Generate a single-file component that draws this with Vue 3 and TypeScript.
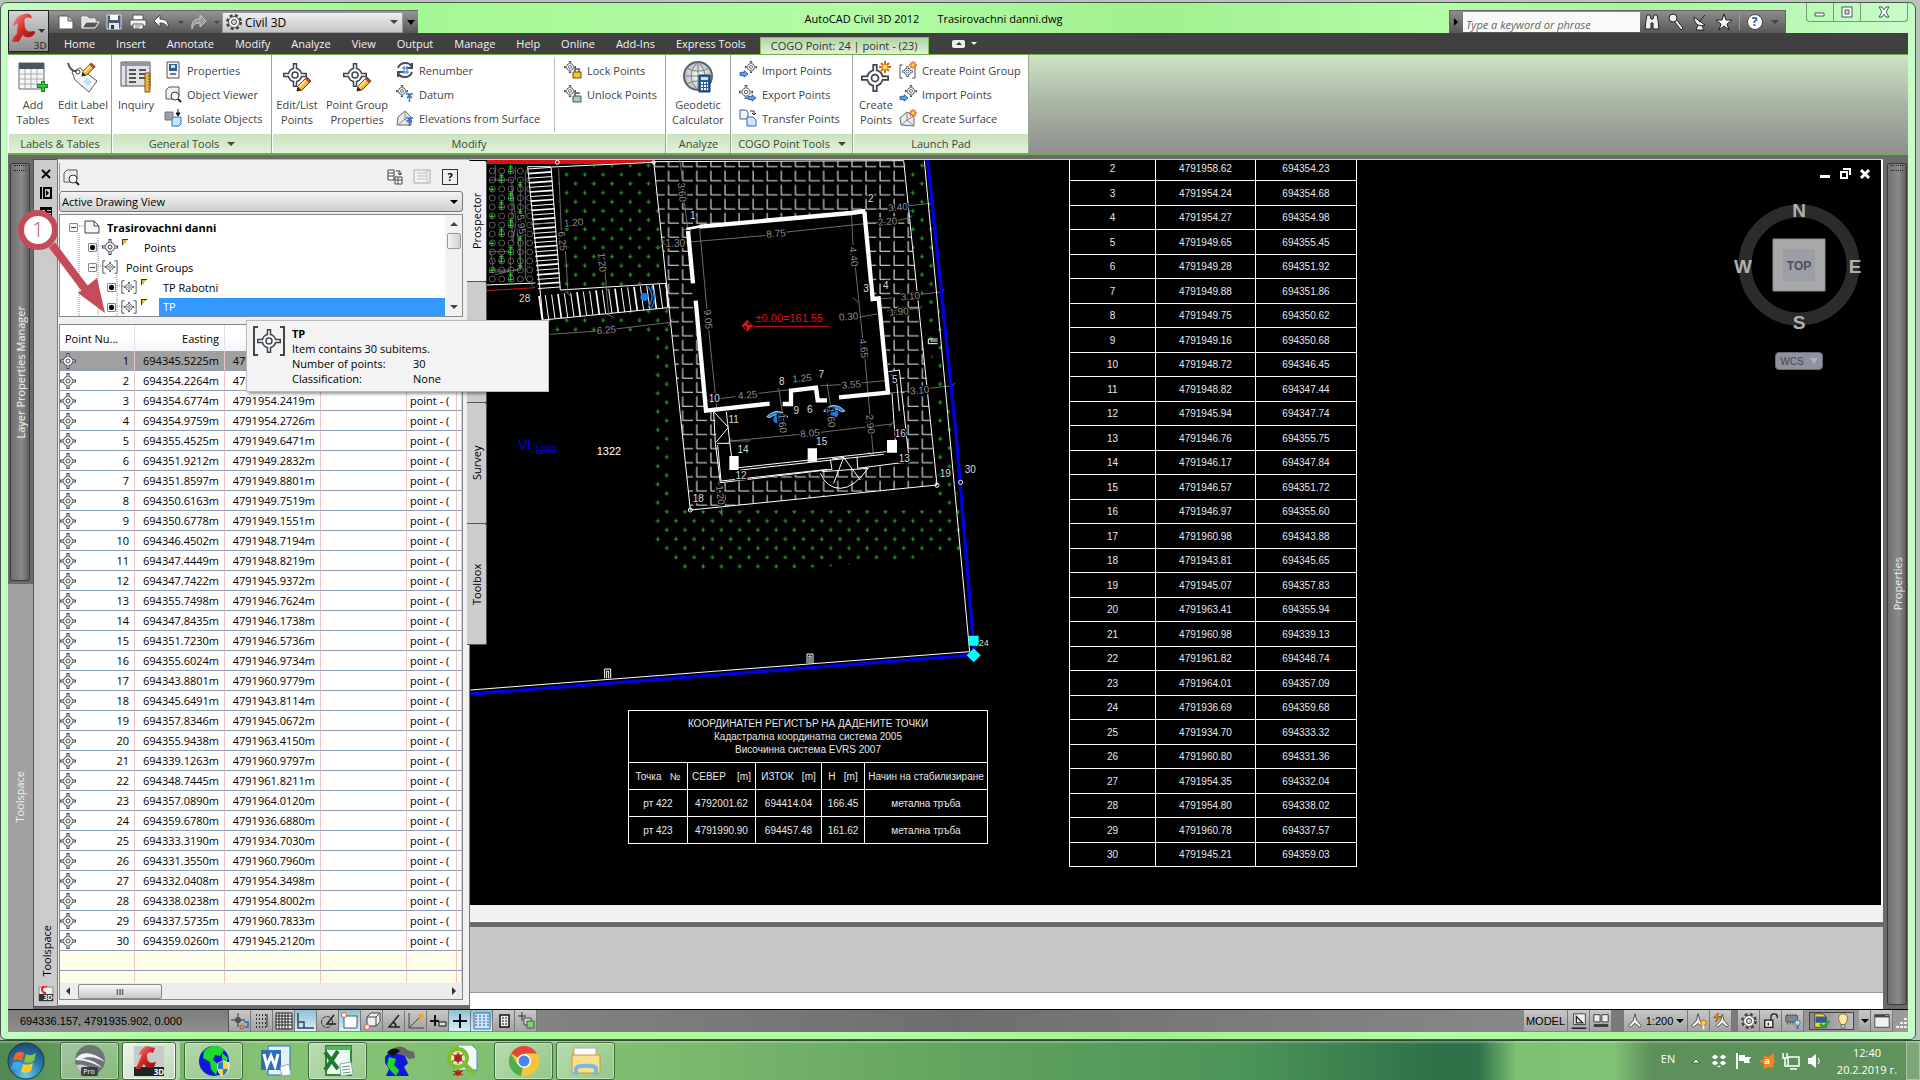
<script setup lang="ts">
interface Tool { icon: string; label: string }
interface Panel { title: string; menu?: boolean; big: Tool[]; small: Tool[]; extra?: Tool[] }

const tabs = ['Home', 'Insert', 'Annotate', 'Modify', 'Analyze', 'View', 'Output', 'Manage', 'Help', 'Online', 'Add-Ins', 'Express Tools']

const quick = ['new', 'open', 'save', 'print', 'undo', 'redo']

const panels: Panel[] = [
  { title: 'Labels & Tables', big: [{ icon: 'addtable', label: 'Add\nTables' }, { icon: 'label', label: 'Edit Label\nText' }], small: [] },
  {
    title: 'General Tools', menu: true, big: [{ icon: 'inquiry', label: 'Inquiry' }],
    small: [{ icon: 'props', label: 'Properties' }, { icon: 'viewer', label: 'Object Viewer' }, { icon: 'isolate', label: 'Isolate Objects' }],
  },
  {
    title: 'Modify', big: [{ icon: 'editpt', label: 'Edit/List\nPoints' }, { icon: 'editpt', label: 'Point Group\nProperties' }],
    small: [{ icon: 'renumber', label: 'Renumber' }, { icon: 'datum', label: 'Datum' }, { icon: 'elev', label: 'Elevations from Surface' }],
    extra: [{ icon: 'lock', label: 'Lock Points' }, { icon: 'unlock', label: 'Unlock Points' }],
  },
  { title: 'Analyze', big: [{ icon: 'geocalc', label: 'Geodetic\nCalculator' }], small: [] },
  {
    title: 'COGO Point Tools', menu: true, big: [],
    small: [{ icon: 'import', label: 'Import Points' }, { icon: 'export', label: 'Export Points' }, { icon: 'transfer', label: 'Transfer Points' }],
  },
  {
    title: 'Launch Pad', big: [{ icon: 'creatept', label: 'Create\nPoints' }],
    small: [{ icon: 'newgroup', label: 'Create Point Group' }, { icon: 'import', label: 'Import Points' }, { icon: 'surface', label: 'Create Surface' }],
  },
]

const points: [string, string][] = [
  ['694345.5225', '4791960.4700'], ['694354.2264', '4791958.6200'], ['694354.6774', '4791954.2419'], ['694354.9759', '4791954.2726'],
  ['694355.4525', '4791949.6471'], ['694351.9212', '4791949.2832'], ['694351.8597', '4791949.8801'], ['694350.6163', '4791949.7519'],
  ['694350.6778', '4791949.1551'], ['694346.4502', '4791948.7194'], ['694347.4449', '4791948.8219'], ['694347.7422', '4791945.9372'],
  ['694355.7498', '4791946.7624'], ['694347.8435', '4791946.1738'], ['694351.7230', '4791946.5736'], ['694355.6024', '4791946.9734'],
  ['694343.8801', '4791960.9779'], ['694345.6491', '4791943.8114'], ['694357.8346', '4791945.0672'], ['694355.9438', '4791963.4150'],
  ['694339.1263', '4791960.9797'], ['694348.7445', '4791961.8211'], ['694357.0890', '4791964.0120'], ['694359.6780', '4791936.6880'],
  ['694333.3190', '4791934.7030'], ['694331.3550', '4791960.7960'], ['694332.0408', '4791954.3498'], ['694338.0238', '4791954.8002'],
  ['694337.5735', '4791960.7833'], ['694359.0260', '4791945.2120'],
]

const sheet: [number, string, string][] = [
  [2, '4791958.62', '694354.23'], [3, '4791954.24', '694354.68'], [4, '4791954.27', '694354.98'], [5, '4791949.65', '694355.45'],
  [6, '4791949.28', '694351.92'], [7, '4791949.88', '694351.86'], [8, '4791949.75', '694350.62'], [9, '4791949.16', '694350.68'],
  [10, '4791948.72', '694346.45'], [11, '4791948.82', '694347.44'], [12, '4791945.94', '694347.74'], [13, '4791946.76', '694355.75'],
  [14, '4791946.17', '694347.84'], [15, '4791946.57', '694351.72'], [16, '4791946.97', '694355.60'], [17, '4791960.98', '694343.88'],
  [18, '4791943.81', '694345.65'], [19, '4791945.07', '694357.83'], [20, '4791963.41', '694355.94'], [21, '4791960.98', '694339.13'],
  [22, '4791961.82', '694348.74'], [23, '4791964.01', '694357.09'], [24, '4791936.69', '694359.68'], [25, '4791934.70', '694333.32'],
  [26, '4791960.80', '694331.36'], [27, '4791954.35', '694332.04'], [28, '4791954.80', '694338.02'], [29, '4791960.78', '694337.57'],
  [30, '4791945.21', '694359.03'],
]

// Dimension texts: value, x, y, rotation
const dims: [string, number, number, number][] = [
  ['3.60', 635, 112, 84], ['1.30', 615, 265, 0], ['8.75', 917, 236, -5], ['9.05', 713, 493, 84], ['4.40', 1150, 305, 84],
  ['3.40', 1283, 157, -5], ['2.20', 1252, 200, -5], ['3.10', 1320, 424, -5], ['0.30', 1135, 485, -5], ['1.90', 1286, 470, -5],
  ['4.65', 1180, 580, 84], ['1.25', 995, 670, -5], ['3.55', 1143, 689, -5], ['4.25', 832, 720, -5], ['3.10', 1348, 706, -5],
  ['8.05', 1019, 835, -5], ['2.90', 1200, 808, 84], ['1.60', 936, 805, 84], ['1.60', 1082, 788, 84], ['1.20', 750, 1020, 84],
  ['5.95', 153, 208, 84], ['1.20', 310, 203, -5], ['6.25', 276, 258, 84], ['1.20', 395, 322, 84], ['6.25', 408, 525, -5],
]
const marks: [string, number, number][] = [
  ['1', 667, 183], ['2', 1201, 130], ['3', 1187, 402], ['4', 1246, 393], ['5', 1273, 675], ['6', 1018, 765], ['7', 1053, 660],
  ['8', 934, 681], ['9', 978, 768], ['10', 732, 730], ['11', 790, 793], ['12', 812, 963], ['13', 1302, 910], ['14', 818, 885],
  ['15', 1054, 861], ['16', 1290, 837], ['18', 684, 1030], ['19', 1425, 955], ['30', 1500, 945], ['28', 163, 432],
]

const flight = Array.from({ length: 27 }, (_, i) => {
  const y = 42 + i * 13.8
  return { x1: 172 + (y - 35) * 0.085, y1: y, x2: 243 + (y - 35) * 0.075, y2: y - 5, w: i % 2 ? 5 : 3 }
})
const walk = Array.from({ length: 21 }, (_, i) => {
  const x = 206 + i * 19
  const y = 423 - (x - 200) * 0.095
  return { x1: x, y1: y, x2: x + 10, y2: y + 72, w: i % 3 ? 3 : 5 }
})
const trees = Array.from({ length: 65 }, (_, i) => ({ x: 66 + (i % 5) * 28, y: 48 + Math.floor(i / 5) * 27 }))

const toggles = [
  { icon: 's-infer' }, { icon: 's-snap' }, { icon: 's-grid' }, { icon: 's-ortho', on: true }, { icon: 's-polar' }, { icon: 's-osnap', on: true },
  { icon: 's-3d' }, { icon: 's-track' }, { icon: 's-ducs' }, { icon: 's-dyn' }, { icon: 's-lwt', on: true }, { icon: 's-tpy', on: true },
  { icon: 's-qp' }, { icon: 's-sc' },
]
const apps = [
  { icon: 't-earth', kind: 'open' }, { icon: 't-cad', kind: 'active' }, { icon: 't-globe', kind: 'open' }, { icon: 't-word', kind: '' },
  { icon: 't-excel', kind: 'open' }, { icon: 't-mole', kind: '' }, { icon: 't-bug', kind: '' }, { icon: 't-chrome', kind: 'open' },
  { icon: 't-folder', kind: 'open' },
]
</script>

<template>
  <svg class="sprite" aria-hidden="true">
    <defs>
      <linearGradient id="g-red" x1="0" y1="0" x2="1" y2="1"><stop offset="0" stop-color="#f5a0a0" /><stop offset=".5" stop-color="#d42a2a" /><stop offset="1" stop-color="#8a0808" /></linearGradient>
      <radialGradient id="g-orb" cx=".5" cy=".9" r=".9"><stop offset="0" stop-color="#5fd0ee" /><stop offset=".5" stop-color="#2a7bb0" /><stop offset="1" stop-color="#1c4a70" /></radialGradient>
      <radialGradient id="g-silver"><stop offset="0" stop-color="#fff" /><stop offset="1" stop-color="#b9bdc4" /></radialGradient>
    </defs>
    <symbol id="pt" viewBox="0 0 16 16"><path d="M8 0v16M0 8h16" stroke="#3d4450" stroke-width="3" /><circle cx="8" cy="8" r="5" fill="#3d4450" /><path d="M8 1v14M1 8h14" stroke="#fff" /><circle cx="8" cy="8" r="4" fill="#fff" /><circle cx="8" cy="8" r="2" fill="none" stroke="#3d4450" /></symbol>
    <symbol id="ptg" viewBox="0 0 18 16"><path d="M4 1H1v14h3M14 1h3v14h-3" fill="none" stroke="#3d4450" /><use href="#pt" x="3" y="2" width="12" height="12" /></symbol>
    <symbol id="pencil" viewBox="0 0 16 16"><path d="M1 15l1-5 9-9 4 4-9 9z" fill="#f6b73c" stroke="#5b3a10" /><path d="M3 11l8-8" stroke="#ffe08a" stroke-width="2" /><path d="M1 15l1-4 3 3z" fill="#222" /><path d="M11 1l4 4-2 2-4-4z" fill="#b5402a" /></symbol>
    <symbol id="spark" viewBox="0 0 12 12"><path d="M6 0v12M0 6h12M2 2l8 8M10 2l-8 8" stroke="#e0641a" stroke-width="2" /><circle cx="6" cy="6" r="2.500" fill="#ffe04a" /></symbol>
    <symbol id="arrow" viewBox="0 0 12 10"><path d="M1 3h5V1l5 4-5 4V7H1z" fill="#5aa2ea" stroke="#1b4f92" /></symbol>

    <symbol id="new" viewBox="0 0 20 16"><path d="M3 2h9l5 5v8H3z" fill="#fff" stroke="#555" /><path d="M12 2v5h5" fill="#ccc" stroke="#555" /></symbol>
    <symbol id="open" viewBox="0 0 20 16"><path d="M2 14V3h5l2 2h6v3" fill="#ddd" stroke="#fff" /><path d="M2 14L6 8h13l-4 6z" fill="#555" stroke="#fff" /></symbol>
    <symbol id="save" viewBox="0 0 20 16"><path d="M3 1h14v14H3z" fill="#4c5a70" stroke="#dde" /><path d="M6 1h8v5H6z" fill="#fff" /><path d="M5 9h10v6H5z" fill="#dfe6ee" /><path d="M7 11h3v4H7z" fill="#333" /></symbol>
    <symbol id="print" viewBox="0 0 20 16"><path d="M5 1h10v5H5z" fill="#fff" stroke="#555" /><path d="M2 6h16v6H2z" fill="#f4f4f4" stroke="#555" /><path d="M5 10h10v5H5z" fill="#fff" stroke="#555" /><path d="M7 12h6M7 14h4" stroke="#777" /></symbol>
    <symbol id="undo" viewBox="0 0 20 16"><path d="M2 7l6-6v4c6 0 9 3 8 10-1-4-3-6-8-6v4z" fill="#fff" stroke="#444" /></symbol>
    <symbol id="redo" viewBox="0 0 20 16"><path d="M18 7l-6-6v4C6 5 3 8 4 15c1-4 3-6 8-6v4z" fill="#9a9a9a" stroke="#ccc" /></symbol>
    <symbol id="gear" viewBox="0 0 18 18"><circle cx="9" cy="9" r="6.500" fill="#f5f5f5" stroke="#444" stroke-width="3" stroke-dasharray="3 2.100" /><circle cx="9" cy="9" r="5.500" fill="#f5f5f5" stroke="#555" /><circle cx="9" cy="9" r="2.500" fill="#ddd" stroke="#444" /></symbol>

    <symbol id="addtable" viewBox="0 0 32 32"><path d="M2 2h25v26H2z" fill="#f8f8f8" stroke="#666" /><path d="M2 2h25v6H2z" fill="#4d5565" /><path d="M2 13h25M2 18h25M2 23h25M8 8v20M14 8v20M20 8v20" stroke="#aaa" /><path d="M26 20v11M20 25h11" stroke="#0a8a14" stroke-width="4" /><path d="M26 21v9M21 25h9" stroke="#39c43a" stroke-width="2" /></symbol>
    <symbol id="label" viewBox="0 0 32 32"><path d="M5 11l8-4 17 13-8 11L8 19z" fill="#fafbfc" stroke="#555c66" /><path d="M1 2c2 7 6 9 10 8" fill="none" stroke="#555" stroke-width="2" /><circle cx="11" cy="11" r="2" fill="#fff" stroke="#444" /><path d="M20 17l5 4-4 4-5-4z" fill="#bfe0f8" /><use href="#pencil" x="14" y="1" width="15" height="15" /></symbol>
    <symbol id="inquiry" viewBox="0 0 32 32"><path d="M1 1h29v24H1z" fill="#dfe3e8" stroke="#555" /><path d="M6 1v24" stroke="#555" /><path d="M1 2h29v3H1z" fill="#8f98a4" /><path d="M9 9h7M19 9h7M9 13h7M19 13h7M9 17h7M19 17h7M9 21h7" stroke="#555" stroke-width="2" /><path d="M25 12h5v19h-5z" fill="#f3b434" stroke="#7a5210" /><path d="M28 15h2M28 18h2M28 21h2M28 24h2M28 27h2" stroke="#7a5210" /></symbol>
    <symbol id="editpt" viewBox="0 0 32 32"><use href="#pt" x="2" y="2" width="24" height="24" /><use href="#pencil" x="15" y="15" width="16" height="16" /></symbol>
    <symbol id="geocalc" viewBox="0 0 32 32"><circle cx="16" cy="15" r="14" fill="url(#g-silver)" stroke="#5a616c" stroke-width="2" /><path d="M16 1v28M2 15h28M5 7c6 4 16 4 22 0M5 23c6-4 16-4 22 0M16 1c-9 8-9 20 0 28M16 1c9 8 9 20 0 28" fill="none" stroke="#777f8a" /><path d="M17 14h11v17H17z" fill="#2d5f94" stroke="#173a62" /><path d="M19 16h7v3h-7z" fill="#bfe4ff" /><path d="M19 22h7M19 25h7M19 28h7" stroke="#fff" stroke-width="2" stroke-dasharray="2 1" /></symbol>
    <symbol id="creatept" viewBox="0 0 32 32"><use href="#pt" x="1" y="3" width="28" height="28" /><use href="#spark" x="19" y="0" width="12" height="12" /></symbol>

    <symbol id="props" viewBox="0 0 18 18"><path d="M3 1h12v16H3z" fill="#f3f4f6" stroke="#555" /><path d="M5 3h8v7H5z" fill="#2d5f94" /><path d="M7 4h4v3H7z" fill="#cfe6fa" /><path d="M6 13h6" stroke="#777" stroke-width="2" /></symbol>
    <symbol id="viewer" viewBox="0 0 18 18"><path d="M2 5l3-3h10v9l-3 3H2z" fill="#eef0f2" stroke="#555" /><circle cx="11" cy="11" r="4" fill="#fff" stroke="#333" /><path d="M14 14l3 3" stroke="#222" stroke-width="2" /></symbol>
    <symbol id="isolate" viewBox="0 0 18 18"><path d="M1 3h8v8H1z" fill="#9aa0a8" stroke="#777" /><path d="M8 10l2-2h7v7l-2 2H8z" fill="#c3e6fb" stroke="#2b6fa5" /><path d="M14 0v5M12 4l2 3 2-3z" stroke="#111" fill="#111" /></symbol>
    <symbol id="renumber" viewBox="0 0 18 18"><path d="M2 7c2-6 11-7 14-1M16 2v5h-5M16 11c-2 6-11 7-14 1M2 16v-5h5" fill="none" stroke="#444b55" stroke-width="2" /><path d="M8 5v8M11 5v8M6 7h7M6 11h7" stroke="#2877d0" /></symbol>
    <symbol id="datum" viewBox="0 0 18 18"><use href="#pt" x="0" y="0" width="12" height="12" /><path d="M10 9h7M13.500 17v-7M11 13l2.500-3 2.500 3" fill="none" stroke="#2b78c8" stroke-width="1.500" /></symbol>
    <symbol id="elev" viewBox="0 0 18 18"><path d="M1 16l1-8 7-6 6 6v8z" fill="#e8eaec" stroke="#666" /><path d="M9 2v8l-7 6M9 10l6 6" fill="none" stroke="#888" /><path d="M10 9h7M13.500 17v-7M11 13l2.500-3 2.500 3" fill="none" stroke="#2b78c8" stroke-width="1.500" /></symbol>
    <symbol id="lock" viewBox="0 0 18 18"><use href="#pt" x="0" y="0" width="12" height="12" /><path d="M11 11V8h4v3" fill="none" stroke="#555" stroke-width="1.500" /><path d="M9 11h8v6H9z" fill="#f6c630" stroke="#6b4e08" /></symbol>
    <symbol id="unlock" viewBox="0 0 18 18"><use href="#pt" x="0" y="0" width="12" height="12" /><path d="M11 11V8h4v1" fill="none" stroke="#555" stroke-width="1.500" /><path d="M9 11h8v6H9z" fill="#a9c9c2" stroke="#3d5a54" /></symbol>
    <symbol id="import" viewBox="0 0 18 18"><use href="#pt" x="6" y="0" width="12" height="12" /><use href="#arrow" x="0" y="9" width="10" height="8" /></symbol>
    <symbol id="export" viewBox="0 0 18 18"><use href="#pt" x="0" y="0" width="14" height="14" /><use href="#arrow" x="8" y="9" width="10" height="8" /></symbol>
    <symbol id="transfer" viewBox="0 0 18 18"><path d="M1 1h6l2 2v7H1z" fill="#eef4fa" stroke="#49617c" /><path d="M8 8h6l3 3v6H8z" fill="#cfe6fa" stroke="#2b6fa5" /><path d="M11 2h4v4M13 4l2 2 2-2" fill="none" stroke="#333" /></symbol>
    <symbol id="newgroup" viewBox="0 0 18 18"><use href="#ptg" x="0" y="3" width="17" height="15" /><use href="#spark" x="10" y="0" width="8" height="8" /></symbol>
    <symbol id="surface" viewBox="0 0 18 18"><path d="M1 9l7-6 7 4v10l-13-1z" fill="#e8eaec" stroke="#666" /><path d="M8 3v8l-6 5M8 11l7 6M8 11l7-4" fill="none" stroke="#888" /><use href="#spark" x="10" y="0" width="8" height="8" /></symbol>

    <symbol id="binoc" viewBox="0 0 18 18"><path d="M3 7l1-5h3l1 4h2l1-4h3l1 5 1 9h-6v-6H8v6H2z" fill="#eee" stroke="#222" /></symbol>
    <symbol id="key" viewBox="0 0 18 18"><path d="M7 8l7 9 2-2-7-9z" fill="#eee" stroke="#222" /><circle cx="6" cy="5" r="4" fill="#eee" stroke="#222" /></symbol>
    <symbol id="dish" viewBox="0 0 18 18"><path d="M3 4c0 7 5 10 11 8zM8 9l6-7M7 12l-2 5h8l-2-4" fill="#eee" stroke="#222" /></symbol>
    <symbol id="star" viewBox="0 0 18 18"><path d="M9 1l2 6h6l-5 4 2 6-5-4-5 4 2-6-5-4h6z" fill="#f4f4f4" stroke="#222" /></symbol>

    <symbol id="s-infer" viewBox="0 0 20 20"><path d="M8 2v14M1 9h14M6 7h4v4H6z" fill="none" stroke="#333" /><circle cx="12" cy="16" r="2" fill="none" stroke="#d04a20" /><path d="M14 11h4v5h-3" fill="none" stroke="#2b6fa5" stroke-width="1.500" /></symbol>
    <symbol id="s-snap" viewBox="0 0 20 20"><path d="M4 4h10M4 8h10M4 12h10M4 16h10" stroke="#333" stroke-dasharray="1 2" stroke-width="2" /><path d="M15 3v13" stroke="#222" /></symbol>
    <symbol id="s-grid" viewBox="0 0 20 20"><path d="M2 2h16v16H2zM2 5h16M2 8h16M2 11h16M2 14h16M5 2v16M8 2v16M11 2v16M14 2v16" fill="#eee" stroke="#222" /></symbol>
    <symbol id="s-ortho" viewBox="0 0 20 20"><path d="M2 2v15h16M2 11h6v6" fill="none" stroke="#345" stroke-width="1.500" /></symbol>
    <symbol id="s-polar" viewBox="0 0 20 20"><circle cx="9" cy="11" r="5.500" fill="none" stroke="#333" stroke-dasharray="4 1" /><path d="M18 13H9l7-9" fill="none" stroke="#222" stroke-width="1.500" /></symbol>
    <symbol id="s-osnap" viewBox="0 0 20 20"><path d="M4 5h13v12H4z" fill="#fff" stroke="#456" /><circle cx="4" cy="4" r="2.500" fill="#fff" stroke="#d8582a" /></symbol>
    <symbol id="s-3d" viewBox="0 0 20 20"><path d="M5 6l4-4h9v9l-4 4H5zM5 6h9v9M14 6l4-4" fill="#eee" stroke="#444" /><circle cx="5" cy="16" r="2.500" fill="#fff" stroke="#d8582a" /></symbol>
    <symbol id="s-track" viewBox="0 0 20 20"><path d="M15 4L5 16h11M9 11c2 1 3 3 3 5" fill="none" stroke="#222" stroke-width="1.500" /></symbol>
    <symbol id="s-ducs" viewBox="0 0 20 20"><path d="M3 2v15h15M3 17L13 7" fill="none" stroke="#444" /><path d="M13 8l-1-4 4-2 2 5-3 0 1 4z" fill="#f6a21c" /></symbol>
    <symbol id="s-dyn" viewBox="0 0 20 20"><path d="M7 4v11M2 10h9" stroke="#111" stroke-width="2" /><path d="M11 11h7v4h-7z" fill="#ddd" stroke="#111" /></symbol>
    <symbol id="s-lwt" viewBox="0 0 20 20"><path d="M10 3v14M3 10h14" stroke="#111" stroke-width="2" /></symbol>
    <symbol id="s-tpy" viewBox="0 0 20 20"><path d="M2 2h16v16H2z" fill="#cfe2f4" stroke="#2b6fa5" /><path d="M3 5h14M3 8h14M3 11h14M3 14h14" stroke="#6f9fd0" stroke-width="2" stroke-dasharray="2 2" /></symbol>
    <symbol id="s-qp" viewBox="0 0 20 20"><path d="M6 4h9v12H6z" fill="#eee" stroke="#111" stroke-width="1.500" /><path d="M8 7h5M8 10h5M8 13h5" stroke="#111" stroke-dasharray="2 1" /></symbol>
    <symbol id="s-sc" viewBox="0 0 20 20"><path d="M6 1v9M2 5h8" stroke="#333" /><path d="M8 7h7v7H8z" fill="#d5d5d5" stroke="#444" /><path d="M11 10h7v7h-7z" fill="#8fc77d" stroke="#336b2a" /></symbol>
    <symbol id="s-model" viewBox="0 0 20 20"><path d="M4 2h13v12H4z" fill="#f4f4f4" stroke="#333" /><path d="M7 5v7h7zM2 18h16" fill="none" stroke="#222" stroke-width="1.500" /></symbol>
    <symbol id="s-views" viewBox="0 0 20 20"><path d="M2 3h7v8H2zM11 3h7v8h-7z" fill="#eee" stroke="#333" /><path d="M2 15h16" stroke="#333" stroke-width="3" /></symbol>
    <symbol id="s-scale" viewBox="0 0 20 20"><path d="M10 1l2 8 6 7-2 2-6-5-6 5-2-2 6-7z" fill="#f2f2f2" stroke="#333" /></symbol>
    <symbol id="s-anno" viewBox="0 0 20 20"><use href="#s-scale" x="0" y="0" width="18" height="20" /><circle cx="15" cy="12" r="3" fill="#ffd23c" stroke="#b8601a" /><path d="M15 15v4" stroke="#fff" stroke-width="2" /></symbol>
    <symbol id="s-auto" viewBox="0 0 20 20"><use href="#s-scale" x="3" y="0" width="17" height="20" /><path d="M7 1L2 6h4l-2 5 6-6H6z" fill="#f6a21c" stroke="#a05410" /></symbol>
    <symbol id="s-lock" viewBox="0 0 20 20"><path d="M3 9h9v8H3z" fill="#eee" stroke="#222" stroke-width="1.500" /><path d="M10 9V5c0-4 7-4 7 0v2M7 12v3" fill="none" stroke="#222" stroke-width="1.500" /></symbol>
    <symbol id="s-hw" viewBox="0 0 20 20"><path d="M2 4h13v7H2z" fill="#7e8894" stroke="#555" /><path d="M4 2v2M7 2v2M10 2v2M13 2v2M4 11v3M7 11v3M10 11v3" stroke="#555" /><circle cx="15" cy="12" r="3" fill="#bcdcf6" stroke="#2b6fa5" /><path d="M15 15v4" stroke="#2b6fa5" stroke-width="2" /></symbol>
    <symbol id="s-plot" viewBox="0 0 20 20"><path d="M3 2h9l4 4v11H3z" fill="#f6d238" stroke="#444" /><path d="M4 5h12v7H4z" fill="#2d5f94" /><path d="M9 13l4 4 6-7" fill="none" stroke="#2fa52f" stroke-width="3" /></symbol>
    <symbol id="s-bulb" viewBox="0 0 20 20"><path d="M8 14C3 8 5 2 10 2s7 6 2 12z" fill="#ffe9a0" stroke="#7a6a30" /><path d="M8 14h4v4H8z" fill="#ccc" stroke="#666" /></symbol>
    <symbol id="s-clean" viewBox="0 0 20 20"><path d="M2 3h16v14H2z" fill="#f0f0f0" stroke="#444" /><path d="M2 3h16v3H2z" fill="#444" /><path d="M14 4h3" stroke="#fff" stroke-dasharray="1 1" /></symbol>

    <symbol id="t-earth" viewBox="0 0 32 32"><circle cx="16" cy="15" r="15" fill="#6d7478" /><path d="M1 15C8 4 22 8 31 17c-9-5-17-6-23-3 6 0 14 2 20 9-8-5-17-8-27-8z" fill="#f1f3f4" /><path d="M2 20c8-2 14 2 18 9-8 2-15-1-18-9z" fill="#c7cdd0" /><rect x="7" y="22" width="17" height="9" rx="2" fill="#3a3e40" /><text x="15" y="29" font-size="7" text-anchor="middle" fill="#fff">Pro</text></symbol>
    <symbol id="t-cad" viewBox="0 0 32 32"><path d="M1 1h30v30H1z" fill="#c9c9c9" /><path d="M1 22h30v9H1z" fill="#222" /><path d="M14 1l8 2-2 5c-4-2-6 0-6 3 0 6 3 8 9 6l-2 5c-5 2-9 0-10-3l-4 5H2l3-5 4-10-3 1c1-5 4-8 8-9z" fill="url(#g-red)" /><text x="26" y="30" font-size="8" font-weight="700" text-anchor="middle" fill="#fff">3D</text></symbol>
    <symbol id="t-globe" viewBox="0 0 32 32"><circle cx="16" cy="16" r="15" fill="#0c19d8" /><path d="M6 6c6-7 16-6 20-1l-4 6-5-1-2 5 6 5-3 10-5-6-1-7-7-4z" fill="#1ed82a" /><path d="M24 8l6 5-2 6-4-4z" fill="#1ed82a" /><path d="M20 18l5-2 6 2c0 8-2 11-6 13-4-2-6-5-5-13z" fill="#f7d23a" stroke="#fff" /><path d="M20 24h5v-8l-5 2zM25 24h5c-1 3-2 5-5 7z" fill="#2b7ad0" /></symbol>
    <symbol id="t-word" viewBox="0 0 32 32"><path d="M8 1h22v29H8z" fill="#e8f1fa" stroke="#2b6ab5" /><path d="M1 5h20v20H1z" fill="#2f6fba" /><path d="M4 9l3 12 4-10 4 10 3-12" fill="none" stroke="#fff" stroke-width="3" /><path d="M20 22l9-3 2 11-9 1z" fill="#fff" stroke="#8ab" /></symbol>
    <symbol id="t-excel" viewBox="0 0 32 32"><path d="M4 1h25v29H4z" fill="#eef8ee" stroke="#2a8a3e" stroke-width="2" /><path d="M4 1h25v4H4z" fill="#4cb85c" /><path d="M3 7l13 17M16 6L3 25" stroke="#1e7a35" stroke-width="4" /><path d="M18 19l11-2 2 12-12 2z" fill="#fff" stroke="#8ab" /><path d="M20 22l8-1M20 25l8-1M21 28l8-1" stroke="#5a9a6a" /></symbol>
    <symbol id="t-mole" viewBox="0 0 32 32"><path d="M1 12c4-6 14-6 20-1l3 7-4 4 5 9H2l3-7-4-6z" fill="#0c19d8" /><path d="M5 12l7 2-2 6 5 5-3 6-5-5-4-6z" fill="#1ed82a" /><path d="M9 5c4-5 11-4 14 0l7 2 1 6-6 1-4-3-7-2z" fill="#666" /><path d="M3 8c3-5 9-6 13-2l-7 5z" fill="#111" /></symbol>
    <symbol id="t-bug" viewBox="0 0 32 32"><path d="M12 0h14l5 5v20H12z" fill="#f2f7fd" stroke="#4a8ad0" /><circle cx="12" cy="13" r="9" fill="#d9efc8" stroke="#7fbf2e" stroke-width="4" /><path d="M19 20l10 9" stroke="#7fbf2e" stroke-width="5" /><circle cx="12" cy="13" r="4" fill="#c43020" /><path d="M6 9l12 8M6 17l12-8M12 7v12" stroke="#a02010" /><circle cx="12" cy="28" r="3" fill="#c43020" /><path d="M7 26l10 4M7 30l10-4" stroke="#a02010" /></symbol>
    <symbol id="t-chrome" viewBox="0 0 32 32"><circle cx="16" cy="16" r="15" fill="#f8c63a" /><path d="M16 16L3 8.500A15 15 0 0 1 29 8.500H16z" fill="#dd4a3a" /><path d="M16 16l-3 15A15 15 0 0 1 3 8.500L9 19z" fill="#4caf50" /><circle cx="16" cy="16" r="7" fill="#fff" /><circle cx="16" cy="16" r="5.500" fill="#4a86e8" /></symbol>
    <symbol id="t-folder" viewBox="0 0 32 32"><path d="M2 5h10l2 3h16v20H2z" fill="#e8bd55" /><path d="M4 3h22v12H4z" fill="#fff" stroke="#aaa" /><path d="M2 10h28v18H2z" fill="#f8e08e" stroke="#c89a3a" /><path d="M6 30v-7c0-3 20-3 20 0v7" fill="none" stroke="#78b8e4" stroke-width="4" /></symbol>
  </svg>

  <div class="desktop">
    <div class="window">
      <button class="app-menu" aria-label="Application menu">
        <svg viewBox="0 0 40 40" width="39" height="40"><path d="M14 3c6-2 10 0 9 4-5-2-8 0-7 5 0 7 3 10 9 8l2 1c-2 6-9 7-13 3l-4 7H3l2-5 3-3 1-11-5 3c1-6 5-11 10-12z" fill="url(#g-red)" /><path d="M30 18h7l-3.500 4z" fill="#333" /><text x="32" y="38" font-size="10" text-anchor="middle" fill="#222">3D</text></svg>
      </button>

      <header class="title">
        <div class="quick">
          <template v-for="q in quick" :key="q">
            <button :class="{ wide: q === 'undo' || q === 'redo' }" :aria-label="q"><svg width="20" height="16"><use :href="'#' + q" /></svg><i v-if="q === 'undo' || q === 'redo'" class="tri"></i></button>
          </template>
          <label class="workspace"><svg width="18" height="18"><use href="#gear" /></svg><select aria-label="Workspace"><option>Civil 3D</option></select><i class="tri"></i></label>
          <button class="more" aria-label="Customize"><i class="tri"></i></button>
        </div>
        <h1><span>AutoCAD Civil 3D 2012</span><span>Trasirovachni danni.dwg</span></h1>
        <div class="info">
          <button class="arrow" aria-label="Collapse search"><i></i></button>
          <input type="text" placeholder="Type a keyword or phrase" aria-label="Search">
          <button aria-label="Find"><svg width="18" height="18"><use href="#binoc" /></svg></button>
          <button aria-label="Subscription"><svg width="18" height="18"><use href="#key" /></svg></button>
          <button aria-label="Communication"><svg width="18" height="18"><use href="#dish" /></svg></button>
          <button aria-label="Favorites"><svg width="18" height="18"><use href="#star" /></svg></button>
          <button class="help"><b>?</b><i class="tri"></i></button>
        </div>
        <div class="sys">
          <button aria-label="Minimize"><svg width="12" height="12"><path d="M1 7h9v3H1z" fill="#fff" stroke="#456" /></svg></button>
          <button aria-label="Restore"><svg width="12" height="12"><path d="M1 1h10v10H1z" fill="#fff" stroke="#456" /><path d="M4 4h4v4H4z" fill="#b5f5a5" stroke="#456" /></svg></button>
          <button class="close" aria-label="Close"><svg width="14" height="12"><path d="M2 1h3l2 3 2-3h3L9 6l3 5H9L7 8l-2 3H2l3-5z" fill="#fff" stroke="#456" /></svg></button>
        </div>
      </header>

      <nav class="tabs">
        <button v-for="t in tabs" :key="t">{{ t }}</button>
        <button class="current">COGO Point: 24 | point - (23)</button>
        <button class="ribbon-toggle" aria-label="Minimize ribbon"><i class="pill"></i><i class="tri"></i></button>
      </nav>

      <section class="ribbon">
        <article v-for="p in panels" :key="p.title" class="panel">
          <div class="tools">
            <button v-for="b in p.big" :key="b.label" class="big"><svg width="32" height="32"><use :href="'#' + b.icon" /></svg><span>{{ b.label }}</span></button>
            <div v-if="p.small.length" class="stack"><button v-for="s in p.small" :key="s.label"><svg width="18" height="18"><use :href="'#' + s.icon" /></svg>{{ s.label }}</button></div>
            <div v-if="p.extra" class="stack second"><button v-for="s in p.extra" :key="s.label"><svg width="18" height="18"><use :href="'#' + s.icon" /></svg>{{ s.label }}</button></div>
          </div>
          <h2>{{ p.title }}<i v-if="p.menu" class="tri"></i></h2>
        </article>
      </section>

      <div class="work">
        <aside class="docks">
          <div class="bar"><span>Layer Properties Manager</span></div>
          <div class="flat"><span>Toolspace</span></div>
        </aside>

        <aside class="grip">
          <button aria-label="Close palette"><svg width="12" height="12"><path d="M2 2l8 8M10 2l-8 8" stroke="#000" stroke-width="2" /></svg></button>
          <button aria-label="Auto-hide"><svg width="12" height="12"><path d="M1 0v12M4 1h7v10H4z" fill="none" stroke="#000" stroke-width="2" /><path d="M6 3v6l3-3z" /></svg></button>
          <button aria-label="Palette properties"><svg width="12" height="12"><path d="M0 1h12v10H0z" /><path d="M2 4h3v1H2zM2 7h3v1H2zM7 4h4v1H7zM7 7h4v1H7z" fill="#ccc" /></svg></button>
          <span>Toolspace</span>
          <svg width="16" height="16"><path d="M1 1h14v14H1z" fill="#eee" stroke="#888" /><path d="M1 8h14v7H1z" fill="#333" /><path d="M9 0C2 0 3 7 8 7" fill="none" stroke="#d22" stroke-width="2" /><text x="10" y="14" font-size="7" font-weight="700" text-anchor="middle" fill="#fff">3D</text></svg>
        </aside>

        <section class="palette">
          <div class="toolbar">
            <button aria-label="Preview"><svg width="18" height="18"><use href="#viewer" /></svg></button>
            <span class="grow"></span>
            <button aria-label="Item view"><svg width="18" height="18"><path d="M2 2h6v10H2zM9 9h7v7H9zM2 5h6M2 8h6M9 12h7M12 9v7" fill="#fff" stroke="#444" /><path d="M10 3h4v4M12 5l2 2 2-2" fill="none" stroke="#333" /></svg></button>
            <button aria-label="Panorama"><svg width="18" height="18"><path d="M1 2h16v13H1z" fill="#f4f4f4" stroke="#aaa" /><path d="M4 5h9M4 8h9M4 11h9M14 2v13" stroke="#bbb" /></svg></button>
            <button class="q">?</button>
          </div>
          <label class="view"><select aria-label="View"><option>Active Drawing View</option></select><i class="tri"></i></label>
          <div class="tree">
            <svg class="lines" width="80" height="101" aria-hidden="true"><path d="M14 18v84M14 11h14M33 23v78M33 31h12M33 51h12M52 60v42M52 71h12M52 91h12" fill="none" stroke="#888" stroke-dasharray="1 1" /></svg>
            <ul>
              <li class="l0"><i class="node minus"></i><svg width="18" height="14"><path d="M2 1h9l5 5v7H2z" fill="#f4f4f4" stroke="#444" /><path d="M11 1v5h5" fill="none" stroke="#444" /></svg><b>Trasirovachni danni</b></li>
              <li class="l1"><i class="node plus"></i><svg width="16" height="16"><use href="#pt" /></svg><em></em><span>Points</span></li>
              <li class="l1 group"><i class="node minus"></i><svg width="16" height="16"><use href="#ptg" /></svg><span>Point Groups</span></li>
              <li class="l2"><i class="node plus"></i><svg width="16" height="16"><use href="#ptg" /></svg><em></em><span>TP Rabotni</span></li>
              <li class="l2 sel"><i class="node plus"></i><svg width="16" height="16"><use href="#ptg" /></svg><em></em><span>TP</span></li>
            </ul>
            <div class="vscroll"><button class="up" aria-label="Scroll up"><i></i></button><b></b><button class="down" aria-label="Scroll down"><i></i></button></div>
          </div>
          <div class="list">
            <div class="clip">
              <table>
                <colgroup><col class="c1"><col class="c2"><col class="c3"><col class="c4"><col class="c5"><col></colgroup>
                <thead><tr><th class="left">Point Nu...</th><th>Easting</th><th></th><th></th><th></th><th></th></tr></thead>
                <tbody>
                  <tr v-for="(p, i) in points" :key="i" :class="{ picked: i === 0 }">
                    <td><div class="num"><svg width="16" height="16"><use href="#pt" /></svg>{{ i + 1 }}</div></td>
                    <td>{{ p[0] }}m</td><td>{{ p[1] }}m</td><td></td><td class="desc"><span v-if="i > 1">point - (</span></td><td></td>
                  </tr>
                  <tr v-for="n in 2" :key="'e' + n" class="blank"><td v-for="c in 6" :key="c"></td></tr>
                </tbody>
              </table>
            </div>
            <div class="hscroll"><button aria-label="Scroll left"><i class="l"></i></button><b>III</b><button aria-label="Scroll right"><i class="r"></i></button></div>
          </div>
        </section>

        <main class="model">
          <div class="canvas">
            <svg class="plan" viewBox="0 15 1600 2235" width="1600" height="2235">
              <defs>
                <pattern id="grass" x="275" y="44" width="54.680" height="54.680" patternUnits="userSpaceOnUse"><path d="M7 14h13M14 7v13M11 16l3 4 3-4M34 41h13M41 34v13M38 43l3 4 3-4" fill="none" stroke="#2bd02b" stroke-width="2" /></pattern>
                <pattern id="paving" x="634" y="37" width="42.300" height="42.300" patternUnits="userSpaceOnUse"><path d="M3 10V40H34" fill="none" stroke="#fff" stroke-width="3" /></pattern>
              </defs>
              <g fill="url(#grass)">
                <path d="M262 40L550 25l37 355-315 30z" />
                <path d="M225 480l370-30V1065H1400V700L1330 300 1300 17h65l113 1168-206 35-402 28H640L548 1190V540H225z" />
              </g>
              <g fill="none" stroke="#8a8a8a" stroke-width="2">
                <circle v-for="(t, i) in trees" :key="i" :cx="t.x" :cy="t.y" r="9" />
                <path d="M55 75h70v180M135 75v-40M150 75v270l-95 8M60 290h60v55H70zM75 80v-50M125 100l12 100-10 60M140 220l12 120-80 20" />
              </g>
              <path v-for="i in 26" :key="'p' + i" :d="`M${58 + (i % 2) * 28 + (i % 3) * 28} ${22 + i * 13.500}h14m-7-7v14`" stroke="#2fd82f" stroke-width="3" />
              <path d="M50 15H550v6L400 27H50z" fill="#e00f12" />
              <path d="M550 20L1300 17l100 973-740 75z" fill="#000" />
              <path d="M550 20L1300 17l100 973-740 75z" fill="url(#paving)" stroke="#fff" stroke-width="3" />
              <path d="M645 218l540-53 28 270 17-5 25 220 32-5 30 275-563 65-15-120-5-95h-30z" fill="#000" />
              <path d="M172 35h70l28 370 317-20 5 73-374 37z" fill="#000" stroke="#fff" stroke-width="3" />
              <g stroke="#fff">
                <line v-for="(s, i) in flight" :key="'f' + i" :x1="s.x1" :y1="s.y1" :x2="s.x2" :y2="s.y2" :stroke-width="s.w" />
                <line v-for="(s, i) in walk" :key="'w' + i" :x1="s.x1" :y1="s.y1" :x2="s.x2" :y2="s.y2" :stroke-width="s.w" />
              </g>
              <path d="M50 390l145-6M245 36l305-14" fill="none" stroke="#fff" stroke-width="3" />
              <path d="M50 407l145-9" stroke="#d01818" stroke-width="3" />
              <g stroke="#808080" stroke-width="2.500" fill="none">
                <path d="M628 15l10 65M642 140l10 80M575 267h15M645 262l260-22M940 232l245-26M688 222l22 245M715 522l25 245M1143 170l5 100M1155 335l22 215M1184 610l25 290M1160 165l95-5M1305 153l80-8M1185 206l40-3M1275 198l45-10M1225 432l40-3M1350 418l68-8M1165 487l55-10M1250 468l100-8M700 737l95-12M865 715l170-20M1050 692l65-3M1170 684l85-8M1255 714l70-6M1375 700l72-8M780 858l210-20M1050 832l215-25M925 700l20 130M1070 685l20 130M745 980l10 100M775 858h65M180 208l75-5M265 40l8 190M285 285l8 130M400 300l15 180M237 538l145-10M435 522l165-20M165 50v320l25 25" />
                <path d="M570 278l12-22M650 268l12-22M1375 153l14-16M1312 196l14-16M1408 418l14-16M1440 700l14-16M1342 468l14-16M770 866l14-16M1256 816l14-16M1192 890l14 12M745 1068l12 14M594 512l12-20M405 475l24 12M640 225l50-10M650 215l12 14" />
                <path d="M283 408l20 18M400 395l16 12M1148 428l16 14" />
              </g>
              <g fill="none" stroke="#fff" stroke-width="13">
                <path d="M688 215l454-41 43-6M653 228l15 157M676 437l31 330 191-21M937 747h25v-40l75-9 5 38h28M1106 727l147-14-28-283-18 2-25-262" />
              </g>
              <path d="M648 222l42-8" stroke="#fff" stroke-width="8" />
              <g fill="none" stroke="#fff" stroke-width="3">
                <path d="M730 770l5 95 15 118 335-40-5-30M768 770l10 90 10 80 460-50M740 865h38M732 772l42 45-36 44M1255 650l32-5 30 275-155 20-2-35M1262 660l15-2 10 110M1265 715l10 145M810 945l430-47M742 870l10 108 320-35M1050 955q20 45 60 45t85-62M1055 950l140-10M1090 985l30-78 50 68M1120 907l-35 5" />
              </g>
              <path d="M777 903h28v42h-28zM1012 880h28v40h-28zM1250 855h30v38h-30z" fill="#fff" />
              <g fill="#1b7ae0" stroke="#fff" stroke-width="2">
                <path d="M889 785q32-32 64 0l-9 3q-23-18-46 0zM1060 768q31-34 64 0l-9 3q-23-19-46 0z" />
                <circle cx="921" cy="793" r="12" stroke="none" /><circle cx="1092" cy="776" r="12" stroke="none" />
                <circle cx="522" cy="426" r="12" stroke="none" /><path d="M533 394q24 31 0 64M542 394q20 31 2 64" fill="none" stroke="#1b7ae0" stroke-width="4" />
              </g>
              <g fill="none">
                <path d="M1372 15l85 820 55 665L0 1617" stroke="#0000e0" stroke-width="10" />
                <path d="M1362 17l136 1473L0 1605" stroke="#fff" stroke-width="3" />
                <path d="M403 1570v-28h18v28M409 1570v-22h6v22M1010 1525v-28h18v28M1016 1525v-22h6v22M1402 552h-28v14h28M1402 558h-22" stroke="#fff" stroke-width="3" />
                <g stroke="#fff" stroke-width="3"><circle cx="550" cy="22" r="5" /><circle cx="261" cy="22" r="6" /><circle cx="660" cy="1065" r="6" /><circle cx="1400" cy="991" r="6" /><circle cx="1471" cy="982" r="6" fill="#000" /></g>
              </g>
              <path d="M1495 1442h30v30h-30zM1510 1480l21 21-21 21-21-21z" fill="#0ff" />
              <g fill="#e01010" stroke="#e01010"><path d="M831 495l17 17-17 17-17-17z" /><path d="M850 514h227" stroke-width="3" /></g>
              <path d="M833 500v10h10zM829 524v-10h-10z" fill="#000" />
              <text class="elevation" x="957" y="501">±0.00=161.55</text>
              <g class="dims"><text v-for="(d, i) in dims" :key="i" :transform="`translate(${d[1]} ${d[2]}) rotate(${d[3]})`" y="10">{{ d[0] }}</text></g>
              <g class="marks"><text v-for="(m, i) in marks" :key="i" :x="m[1]" :y="m[2] + 10">{{ m[0] }}</text><text class="tiny" x="1540" y="1473">24</text></g>
              <text class="lot" x="163" y="885">VI</text><text class="lot small" x="225" y="898">1289</text>
              <path d="M195 887h60" stroke="#0000e0" stroke-width="3" />
              <text class="house" x="416" y="900">1322</text>
            </svg>

            <table class="register">
              <colgroup><col class="r1"><col class="r2"><col class="r3"><col class="r4"><col class="r5"></colgroup>
              <thead>
                <tr class="cap"><th colspan="5"><p>КООРДИНАТЕН РЕГИСТЪР НА ДАДЕНИТЕ ТОЧКИ</p><p>Кадастрална координатна система 2005</p><p>Височинна система EVRS 2007</p></th></tr>
                <tr><th>Точка &nbsp; №</th><th>СЕВЕР &nbsp;&nbsp; [m]</th><th>ИЗТОК &nbsp; [m]</th><th>Н &nbsp; [m]</th><th>Начин на стабилизиране</th></tr>
              </thead>
              <tbody>
                <tr><td>рт 422</td><td>4792001.62</td><td>694414.04</td><td>166.45</td><td>метална тръба</td></tr>
                <tr><td>рт 423</td><td>4791990.90</td><td>694457.48</td><td>161.62</td><td>метална тръба</td></tr>
              </tbody>
            </table>

            <table class="sheet">
              <tbody><tr v-for="s in sheet" :key="s[0]"><td>{{ s[0] }}</td><td>{{ s[1] }}</td><td>{{ s[2] }}</td></tr></tbody>
            </table>

            <div class="mdi">
              <button aria-label="Minimize drawing"><svg width="12" height="12"><path d="M1 7h10v3H1z" fill="#fff" /></svg></button>
              <button aria-label="Restore drawing"><svg width="12" height="12"><path d="M2 4h6v6H2zM4 1h7v6" fill="none" stroke="#fff" stroke-width="2" /></svg></button>
              <button aria-label="Close drawing"><svg width="12" height="12"><path d="M2 2l8 8M10 2l-8 8" stroke="#fff" stroke-width="3" /></svg></button>
            </div>
            <div class="cube">
              <svg width="132" height="136" viewBox="0 0 132 136"><circle cx="66" cy="66" r="54" fill="none" stroke="#2b2b2b" stroke-width="13" /><path d="M40 40h52v52H40z" fill="#a8a8a8" stroke="#8c8c8c" /><path d="M50 50h32v32H50z" fill="#9c9ea6" /><g text-anchor="middle"><text x="66" y="18">N</text><text x="66" y="130">S</text><text x="10" y="74">W</text><text x="122" y="74">E</text><text class="top" x="66" y="71">TOP</text></g></svg>
              <button class="wcs">WCS<i></i></button>
            </div>
          </div>
          <div class="strip"></div>
          <div class="history"></div>
          <input class="command" type="text" aria-label="Command line">
        </main>

        <aside class="docks right"><div class="bar"><span>Properties</span></div></aside>

        <div class="side-tabs"><button class="on">Prospector</button><button aria-label="Settings"></button><button>Survey</button><button>Toolbox</button></div>

        <div class="tip" role="tooltip">
          <svg width="32" height="30" viewBox="0 0 32 30"><path d="M5 1H1v28h4M27 1h4v28h-4" fill="none" stroke="#444" stroke-width="2" /><use href="#pt" x="4" y="3" width="24" height="24" /></svg>
          <div><b>TP</b><p>Item contains 30 subitems.</p><p class="pair"><span>Number of points:</span><span>30</span></p><p class="pair"><span>Classification:</span><span>None</span></p></div>
        </div>

        <svg class="callout" width="100" height="120"><path d="M36 36l40 53" stroke="#c54b5a" stroke-width="8" /><path d="M89 104L62 84l19-15z" fill="#c54b5a" /><circle cx="22" cy="21" r="17" fill="#fff" stroke="#c54b5a" stroke-width="6" /><text x="22" y="28" text-anchor="middle">1</text></svg>
      </div>

      <footer class="status">
        <div class="coords">694336.157, 4791935.902, 0.000</div>
        <button v-for="t in toggles" :key="t.icon" :class="{ lit: t.on }" :aria-label="t.icon.slice(2)"><svg width="20" height="20"><use :href="'#' + t.icon" /></svg></button>
        <span class="grow"></span>
        <button class="model-btn">MODEL</button>
        <button aria-label="Model view"><svg width="18" height="18"><use href="#s-model" /></svg></button>
        <button aria-label="Layouts"><svg width="18" height="18"><use href="#s-views" /></svg></button>
        <span class="gap12"></span>
        <button class="scale"><svg width="16" height="16"><use href="#s-scale" /></svg>1:200<i class="tri"></i></button>
        <button aria-label="Annotation visibility"><svg width="18" height="18"><use href="#s-anno" /></svg></button>
        <button aria-label="Auto scale"><svg width="18" height="18"><use href="#s-auto" /></svg></button>
        <span class="gap6"></span>
        <button aria-label="Workspace"><svg width="18" height="18"><use href="#gear" /></svg></button>
        <button aria-label="Lock UI"><svg width="18" height="18"><use href="#s-lock" /></svg></button>
        <button aria-label="Hardware"><svg width="18" height="18"><use href="#s-hw" /></svg></button>
        <span class="tray"><svg width="18" height="18"><use href="#s-plot" /></svg><svg width="18" height="18"><use href="#s-bulb" /></svg></span>
        <button class="slim" aria-label="Tray menu"><i class="tri"></i></button>
        <button aria-label="Clean screen"><svg width="18" height="18"><use href="#s-clean" /></svg></button>
        <svg width="15" height="20" class="sizer"><path d="M11 9h3M7 13h3M11 13h3M3 17h3M7 17h3M11 17h3" stroke="#eee" stroke-width="2" /></svg>
      </footer>
    </div>

    <footer class="taskbar">
      <button class="orb" aria-label="Start"><svg width="40" height="40"><circle cx="20" cy="20" r="18" fill="url(#g-orb)" stroke="#234" /><path d="M9 13q5-4 9-1l-2 8q-4-3-9 0z" fill="#f0662a" /><path d="M20 13q4 3 10-1l-2 8q-5 3-10 1z" fill="#8cc63f" /><path d="M7 22q5-3 9 0l-2 8q-4-3-9-1z" fill="#3fa9e8" /><path d="M17 23q5 2 10-1l-2 8q-5 3-10 1z" fill="#fbc92e" /></svg></button>
      <button v-for="a in apps" :key="a.icon" :class="['app', a.kind]" :aria-label="a.icon.slice(2)"><svg width="32" height="32"><use :href="'#' + a.icon" /></svg></button>
      <span class="grow"></span>
      <button class="lang">EN</button>
      <div class="tray-icons">
        <svg width="16" height="16"><path d="M4 10l4-4 4 4z" fill="#fff" stroke="#365" /></svg>
        <svg width="18" height="16"><path d="M5 1l4 3-4 3-4-3zM13 1l4 3-4 3-4-3zM5 7l4 3-4 3-4-3zM13 7l4 3-4 3-4-3zM9 12l3 1-3 2-3-2z" fill="#fff" stroke="#5d8f5b" /></svg>
        <svg width="18" height="18"><path d="M3 1v16" stroke="#fff" stroke-width="2" /><path d="M5 3h6v2h6l-2 3 1 3h-6V9H5z" fill="#fff" /></svg>
        <svg width="18" height="18"><path d="M5 3l5 2 6-4v6l1 3-2 2 1 4-5-1-6 2 1-5-5-3 5-2z" fill="#f58220" /><text x="9" y="12" font-size="9" font-weight="700" text-anchor="middle" fill="#fff">a</text></svg>
        <svg width="18" height="18"><path d="M6 5h11v9H6zM8 17h7M1 1v5h4V1M3 6v8h3" fill="none" stroke="#fff" stroke-width="1.500" /></svg>
        <svg width="18" height="18"><path d="M2 6h3l5-4v14l-5-4H2z" fill="#fff" /><path d="M12 6q3 3 0 6" fill="none" stroke="#fff" /></svg>
      </div>
      <time><span>12:40</span><span>20.2.2019 г.</span></time>
      <button class="peek" aria-label="Show desktop"></button>
    </footer>
  </div>
</template>

<style>
body { margin: 0; background: #c9ccd4; }
</style>

<style scoped>
* { box-sizing: border-box; }
button, input, select { font: inherit; color: inherit; border: 0; padding: 0; margin: 0; background: none; border-radius: 0; }
h1, h2, p, ul { margin: 0; padding: 0; font-weight: 400; font-size: inherit; }
svg { flex: none; display: block; }
.sprite { position: absolute; width: 0; height: 0; }
.tri { display: inline-block; flex: none; border: 4px solid transparent; border-top-color: currentColor; border-bottom: 0; }
.grow { flex: 1; }

.desktop { display: flex; flex-direction: column; min-height: 100vh; padding-top: 2px; background: #b9c4bb; font: 11px/15px "Open Sans", "Noto Sans", sans-serif; color: #000; }
.window { position: relative; flex: 1; display: flex; flex-direction: column; margin-right: 4px; padding: 0 7px 7px; border: 1px solid #44584a; border-radius: 7px 7px 6px 6px; background: linear-gradient(90deg, #c8fbc8, #b2fba2 8%, #a4f795 20%, #b4fca5 45%, #a0f090 60%, #b4fda6 75%, #a8f59a 85%, #c8fcc8); }

.app-menu { position: absolute; left: 7px; top: 7px; width: 41px; height: 42px; border: 1px solid #222; background: linear-gradient(#d5d5d5, #8d8d8d); z-index: 2; }
.title { display: flex; height: 30px; align-items: flex-end; }
.quick { display: flex; align-items: center; width: 370px; height: 23px; margin-left: 40px; padding-left: 6px; background: linear-gradient(#969696, #555); border-top: 1px solid #666; }
.quick button { width: 24px; display: flex; align-items: center; justify-content: center; }
.quick button.wide { width: 36px; gap: 6px; color: #444; }
.quick .wide .tri { border-width: 3px 3px 0; }
.workspace { display: flex; align-items: center; flex: 1; height: 21px; padding: 0 4px 0 2px; background: linear-gradient(#f0f0f0, #c4c4c4); border: 1px solid #999; }
.workspace select { flex: 1; appearance: none; font-size: 12px; margin-left: 2px; }
.workspace .tri { color: #444; }
.quick .more { width: 15px; color: #000; }
.quick .more .tri { border-width: 5px 4px 0; }
h1 { flex: 1; align-self: center; display: flex; justify-content: center; gap: 18px; }
.info { display: flex; align-items: center; width: 337px; height: 23px; background: linear-gradient(#8d8d8d, #585858); border: 1px solid #666; border-bottom: 0; }
.info button { width: 24px; display: flex; align-items: center; justify-content: center; }
.info .arrow { width: 13px; }
.info .arrow i { border: 4px solid transparent; border-left-color: #000; border-right: 0; }
.info input { width: 179px; height: 20px; padding: 4px 3px 0; background: #f8f8f8; font-style: italic; }
.info input::placeholder { color: #666; }
.info .help { width: 46px; margin-left: 4px; gap: 8px; border-left: 1px solid #999; color: #444; }
.help b { width: 16px; height: 16px; border-radius: 8px; background: #fff; border: 1px solid #444; color: #1d4ea8; font-size: 12px; line-height: 14px; }
.sys { display: flex; align-self: flex-start; width: 102px; height: 19px; margin-left: 20px; border: 1px solid #7a9a78; border-top: 0; border-radius: 0 0 4px 4px; }
.sys button { width: 27px; display: flex; align-items: center; justify-content: center; border-right: 1px solid #7a9a78; }
.sys .close { flex: 1; border: 0; }

.tabs { display: flex; gap: 1px; height: 21px; padding-left: 46px; background: #404040; color: #f2f2f2; }
.tabs button { padding: 0 10px; }
.tabs .current { margin: 4px 0 0 3px; padding: 0 10px; background: linear-gradient(#b2d3a2, #e0f0d8); color: #333; line-height: 14px; border: 1px solid #7cc35a; border-bottom: 0; }
.ribbon-toggle { display: flex; align-items: center; gap: 6px; margin-left: 12px; }
.pill { position: relative; width: 13px; height: 8px; border-radius: 2px; background: #eee; }
.pill::after { content: ""; position: absolute; left: 4px; top: 2px; border: 3px solid transparent; border-bottom-color: #333; border-top: 0; }
.ribbon-toggle .tri { border-width: 3px 3px 0; }

.ribbon { display: grid; grid-template-columns: 104px 160px 394px 65px 122px 176px; height: 101px; border-top: 1px solid #6fae45; border-bottom: 2px solid #6fae45; background: linear-gradient(#cfe3c5, #a9b5a4 50%, #8f8f8f); }
.panel { display: flex; flex-direction: column; min-height: 0; background: #fff; border-right: 1px solid #9aa497; color: #444; }
.tools { display: flex; flex: 1; min-height: 0; padding-left: 2px; }
.big { display: flex; flex-direction: column; align-items: center; width: 46px; padding-top: 6px; }
.big span { flex: none; margin-top: 4px; white-space: pre; text-align: center; }
.panel:nth-child(1) .big + .big { width: 54px; }
.panel:nth-child(3) .big + .big { width: 74px; }
.panel:nth-child(4) .tools, .panel:nth-child(6) .tools { padding-left: 0; }
.panel:nth-child(4) .big { width: 64px; }
.panel:nth-child(2) .big { width: 44px; }
.stack { padding: 3px 0 0 6px; }
.stack button { display: flex; align-items: center; gap: 5px; height: 24px; white-space: nowrap; }
.stack.second { width: 111px; height: 74px; margin: 3px 0 0 auto; padding: 0 0 0 9px; border-left: 1px solid #bbb; }
.panel:nth-child(3) .stack:not(.second) { padding-left: 2px; }
.panel:nth-child(6) .stack { padding-left: 0; }
h2 { display: flex; flex: none; align-items: center; justify-content: center; gap: 8px; height: 19px; margin-left: 1px; background: linear-gradient(#c9e2bd, #e2f2da); color: #3c4a38; }

.work { position: relative; flex: 1; display: flex; padding-top: 4px; background: #6a6a6a; border-bottom: 1px solid #000; }
.docks { display: flex; flex-direction: column; width: 25px; }
.docks span, .grip span, .side-tabs button { writing-mode: vertical-rl; transform: rotate(180deg); }
.docks div { display: flex; align-items: center; justify-content: center; color: #f0f0f0; }
.docks .bar { width: 20px; height: 418px; margin: 4px 0 3px 2px; border: 1px solid #3a3a3a; border-radius: 2px; background: linear-gradient(90deg, #707070, #8a8a8a 60%, #5e5e5e); }
.docks .bar::before { content: ""; position: absolute; top: 10px; width: 12px; height: 4px; border: 1px dotted #222; border-width: 1px 0; }
.docks .flat { flex: 1; padding-right: 2px; background: #a1a1a1; }
.docks.right .bar { flex: 1; height: auto; margin: 4px 0 4px 4px; }
.grip { display: flex; flex-direction: column; align-items: center; width: 24px; padding: 4px 0; background: #cbcbcb; border: 1px solid #555; border-right: 0; margin-bottom: 2px; }
.grip button { height: 19px; }
.grip span { margin: auto 0 9px; padding-right: 2px; }

.palette { display: flex; flex-direction: column; width: 413px; margin-bottom: 3px; padding: 3px 6px 5px 1px; background: #f0f0f0; border: 1px solid #777; border-top-color: #bbb; }
.toolbar { display: flex; align-items: center; gap: 9px; height: 28px; padding: 0 5px 0 2px; border-left: 1px solid #999; }
.toolbar .q { width: 16px; height: 16px; margin: 0 0 0 2px; border: 1px solid #333; font-weight: 700; line-height: 14px; }
.view { display: flex; align-items: center; height: 21px; margin-bottom: 2px; padding: 0 4px 0 0; border: 1px solid #777; border-radius: 3px; background: linear-gradient(#f4f4f4, #cfcfcf); }
.view select { flex: 1; appearance: none; padding-left: 2px; }
.tree { position: relative; display: flex; height: 103px; margin-bottom: 7px; border: 1px solid #828790; background: #fff; overflow: hidden; }
.lines { position: absolute; left: 0; top: 0; }
.tree ul { position: relative; flex: 1; list-style: none; padding-top: 2px; }
.tree li { display: flex; align-items: center; height: 20px; }
.tree svg { margin-left: 5px; }
.l1 { padding-left: 19px; }
.l2 { padding-left: 38px; }
.tree b { margin-left: 6px; }
.tree li span { margin-left: 16px; }
.tree .group span { margin-left: 8px; }
.tree .sel span { flex: 1; height: 18px; margin-left: 12px; padding-left: 4px; background: #3399ff; color: #fff; line-height: 18px; }
.node { position: relative; width: 9px; height: 9px; margin-left: 9px; border: 1px solid #888; border-radius: 1px; background: #f4f4f4; }
.minus::after { content: ""; position: absolute; left: 1px; top: 3px; width: 5px; height: 1px; background: #246; }
.plus::after { content: ""; position: absolute; left: 1px; top: 1px; width: 5px; height: 5px; border-radius: 2px; background: #000; }
.tree em { align-self: flex-start; margin: 2px 0 0 4px; width: 6px; height: 6px; background: linear-gradient(135deg, #f2b91c 50%, transparent 50%); border-top: 1px solid #333; border-left: 1px solid #333; }
.vscroll { display: flex; flex-direction: column; align-items: center; width: 17px; background: #f2f2f2; }
.vscroll button { height: 18px; }
.vscroll i, .hscroll i { display: block; border: 4px solid transparent; }
.vscroll .up i { border-bottom-color: #444; border-top: 0; }
.vscroll .down i { border-top-color: #444; border-bottom: 0; }
.vscroll b { width: 14px; height: 16px; margin: 0 0 auto; border: 1px solid #999; border-radius: 2px; background: linear-gradient(90deg, #f6f6f6, #cfcfcf); }
.list { flex: 1; display: flex; flex-direction: column; min-height: 0; border: 1px solid #828790; background: #fff; }
.clip { flex: 1 1 0; overflow: hidden; }
.clip table { width: 100%; border-collapse: separate; border-spacing: 0; table-layout: fixed; }
.c1 { width: 75px; } .c2 { width: 90px; } .c3 { width: 96px; } .c4 { width: 86px; } .c5 { width: 50px; }
.clip th { height: 26px; padding: 0 5px; text-align: right; font-weight: 400; border-right: 1px solid #dde2ea; background: linear-gradient(#fff 50%, #f2f4f7); }
.clip th.left { text-align: left; }
.clip td { height: 20px; padding: 0 5px 0 0; text-align: right; border-right: 1px solid #f0c4c4; border-bottom: 1px solid #8a9db2; background: #fff; }
.clip .picked td { background: #a0a0a0; }
.clip .blank td { background: #fffee8; }
.num { display: flex; align-items: center; justify-content: space-between; }
.clip .desc { text-align: left; padding-left: 3px; }
.desc span { display: block; width: 42px; overflow: hidden; white-space: nowrap; }
.hscroll { display: flex; align-items: center; height: 16px; background: #ececec; }
.hscroll button { width: 18px; }
.hscroll .l { margin-left: 6px; border-right-color: #333; border-left: 0; width: 0; }
.hscroll .r { margin-left: 8px; border-left-color: #333; border-right: 0; width: 0; }
.hscroll b { width: 84px; height: 15px; margin-right: auto; border: 1px solid #888; border-radius: 2px; background: linear-gradient(#f8f8f8, #c8c8c8); color: #555; font-size: 8px; line-height: 13px; text-align: center; }

.side-tabs { position: absolute; left: 459px; top: 6px; width: 20px; }
.side-tabs button { display: block; width: 20px; height: 121px; background: #ccc; border: 1px solid #555; border-width: 1px 0 0 1px; border-radius: 2px 0 0 2px; }
.side-tabs .on { background: #f0f0f0; }

.model { flex: 1; display: flex; flex-direction: column; min-width: 0; border-top: 1px solid #ccc; }
.canvas { position: relative; flex: 1; background: #000; border-right: 2px solid #fff; overflow: hidden; }
.plan { position: absolute; left: 0; top: 0; width: 534px; height: 745px; font-family: "Liberation Sans", sans-serif; }
.plan text { text-anchor: middle; }
.dims { fill: #8c8c8c; font-size: 30px; }
.dims text, .marks text { stroke: #000; stroke-width: 8px; paint-order: stroke; }
.marks { fill: #d8d8d8; font-size: 30px; }
.marks .tiny { font-size: 27px; stroke: none; }
.elevation { fill: #e01010; font-size: 33px; }
.lot { fill: #0000e0; font-size: 42px; }
.lot.small { font-size: 30px; }
.house { fill: #fff; font-size: 33px; }
.register, .sheet { position: absolute; border-collapse: collapse; table-layout: fixed; color: #e8e8e8; font: 10px/13px "Liberation Sans", sans-serif; text-align: center; }
.register td, .register th, .sheet td { border: 1px solid #fff; padding: 0; font-weight: 400; white-space: nowrap; }
.register { left: 158px; top: 550px; width: 360px; }
.r1 { width: 59px; } .r2 { width: 68px; } .r3 { width: 66px; } .r4 { width: 43px; } .r5 { width: 123px; }
.register tr { height: 27px; }
.register .cap { height: 52px; }
.sheet { left: 599px; top: -4px; width: 288px; }
.sheet tr { height: 25px; }
.sheet tr:nth-child(odd) { height: 24px; }
.sheet td:nth-child(1) { width: 86px; }
.sheet td:nth-child(2) { width: 100px; }
.mdi { position: absolute; right: 10px; top: 8px; display: flex; gap: 8px; }
.cube { position: absolute; right: 16px; top: 39px; display: flex; flex-direction: column; align-items: center; gap: 17px; }
.cube text { font: 700 19px "Liberation Sans", sans-serif; fill: #b0b0b0; }
.cube .top { font-size: 12px; fill: #4c4e55; }
.wcs { display: flex; align-items: center; justify-content: center; gap: 6px; width: 48px; height: 18px; border: 1px solid #666b78; border-radius: 4px; background: #8f919c; color: #454852; font: 10px "Liberation Sans", sans-serif; }
.wcs i { border: 4px solid transparent; border-top: 6px solid #aab0c4; border-bottom: 0; }
.strip { height: 17px; background: #f0f0f0; border-bottom: 1px solid #fff; }
.history { height: 71px; border-top: 5px solid #6a6a6a; border-bottom: 1px solid #999; background: #c8c8c8; }
.command { height: 16px; background: #fff; }

.tip { position: absolute; left: 238px; top: 165px; display: flex; gap: 7px; width: 303px; height: 72px; padding: 5px 6px; background: #f3f3f3; border: 1px solid #bbb; box-shadow: 2px 2px 3px #0006; }
.pair { display: flex; }
.pair span:first-child { width: 121px; }
.callout { position: absolute; left: 8px; top: 54px; }
.callout text { font: 300 20px "Open Sans", sans-serif; fill: #c54b5a; }

.status { display: flex; height: 22px; background: linear-gradient(90deg, #777, #a5a5a5 10%, #808080 30%, #6e6e6e 50%, #9a9a9a); }
.coords { width: 221px; padding: 4px 0 0 12px; font-family: "Liberation Sans", sans-serif; border-right: 1px solid #555; background: linear-gradient(#7c7c7c, #8f8f8f); }
.status button { display: flex; align-items: center; justify-content: center; width: 22px; border-right: 1px solid #777; border-bottom: 1px solid #888; background: linear-gradient(#c8c8c8, #a2a2a2); font: 11px "Liberation Sans", sans-serif; }
.status .lit { background: linear-gradient(#8fc0d4, #d8f0fa); }
.status .model-btn { width: 44px; }
.gap12 { width: 12px; background: #7a7a7a; }
.gap6 { width: 6px; background: #7a7a7a; }
.status .scale { width: 64px; gap: 3px; }
.tray { display: flex; align-items: center; justify-content: center; gap: 4px; width: 45px; margin: 2px 5px; border: 1px solid #444; background: linear-gradient(90deg, #888, #bbb); }
.status .slim { width: 12px; }

.taskbar { display: flex; align-items: center; height: 40px; padding-left: 6px; border-top: 1px solid #2d4a30; background: linear-gradient(#fff5, #fff0 3px), linear-gradient(90deg, #4f8652, #6fae62 6%, #86c274 14%, #7fbd70 33%, #62a35e 50%, #4b9458 65%, #2d7048 75%, #2f7249 77%, #7cc072 79%, #80c575 84%, #5d8f5b 86%, #5f925c); color: #fff; }
.orb { width: 42px; }
.app { display: flex; align-items: center; justify-content: center; width: 59px; height: 38px; margin-left: 3px; border: 1px solid transparent; border-radius: 3px; }
.app.open { border-color: #3f6b3c; background: linear-gradient(135deg, #ffffff70, #ffffff28); box-shadow: inset 0 0 0 1px #ffffff60; }
.app.active { width: 54px; margin-right: 5px; border-color: #3f6b3c; background: linear-gradient(135deg, #fffd, #ffffff80); box-shadow: inset 0 0 0 1px #fff, 4px 0 0 #ffffff70; }
.orb + .app { margin-left: 12px; }
.lang { width: 30px; padding-bottom: 4px; }
.tray-icons { display: flex; align-items: center; gap: 6px; margin: 0 5px; }
time { display: flex; flex-direction: column; align-items: center; width: 76px; line-height: 17px; }
.peek { width: 14px; height: 39px; margin-left: 1px; border: 1px solid #a5c8a2; background: #ffffff30; }
</style>
